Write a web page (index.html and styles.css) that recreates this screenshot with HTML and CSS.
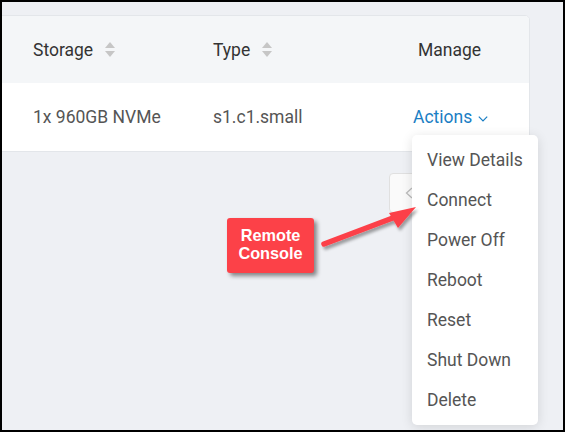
FILE: index.html
```html
<!DOCTYPE html>
<html>
<head>
<meta charset="utf-8">
<link rel="stylesheet" href="styles.css">
</head>
<body>
<div class="frame">
  <div class="card">
    <div class="row head">
      <div class="cell c1">Storage <span class="sort"><i class="up"></i><i class="down"></i></span></div>
      <div class="cell c2">Type <span class="sort"><i class="up"></i><i class="down"></i></span></div>
      <div class="cell c3 manage">Manage</div>
    </div>
    <div class="row body">
      <div class="cell c1">1x 960GB NVMe</div>
      <div class="cell c2">s1.c1.small</div>
      <div class="cell c3"><span class="actions">Actions <svg class="chev" width="10" height="6" viewBox="0 0 10 6"><path d="M0.8 0.6 L5 5 L9.2 0.6" fill="none" stroke="#1a7ec4" stroke-width="1.2"/></svg></span></div>
    </div>
  </div>
  <div class="pager">
    <svg width="8" height="12" viewBox="0 0 8 12"><path d="M7 1 L1.5 6 L7 11" fill="none" stroke="#bbb" stroke-width="1.3"/></svg>
  </div>

  <ul class="menu">
    <li>View Details</li>
    <li>Connect</li>
    <li>Power Off</li>
    <li>Reboot</li>
    <li>Reset</li>
    <li>Shut Down</li>
    <li>Delete</li>
  </ul>

  <div class="callout">Remote<br>Console</div>
  <svg class="arrow" width="565" height="432" viewBox="0 0 565 432">
    <defs>
      <filter id="sh" x="-20%" y="-20%" width="140%" height="160%">
        <feDropShadow dx="2" dy="3" stdDeviation="1.5" flood-color="#000" flood-opacity="0.35"/>
      </filter>
    </defs>
    <g filter="url(#sh)">
      <line x1="324" y1="244" x2="398" y2="216" stroke="#fc4148" stroke-width="5.5" stroke-linecap="round"/>
      <polygon points="416,207 389,213 398,228" fill="#fc4148"/>
    </g>
  </svg>
</div>
</body>
</html>
```

FILE: styles.css
```css
html, body {
  margin: 0;
  padding: 0;
}
body {
  font-family: Roboto, "Noto Sans", Arial, sans-serif;
  font-size: 17.5px;
}
.frame {
  position: relative;
  width: 565px;
  height: 432px;
  box-sizing: border-box;
  border: 2px solid #000;
  background: #eef0f4;
  overflow: hidden;
  padding-top: 13px;
}
.card {
  margin-left: -20px;
  width: 546px;
  background: #fff;
  border: 1px solid #e3e6ea;
  border-radius: 5px;
  overflow: hidden;
}
.row {
  display: grid;
  grid-template-columns: 180px 200px 1fr;
  padding-left: 50px;
  align-items: center;
}
.head {
  height: 67px;
  background: #f4f6f8;
  color: #333;
}
.body {
  height: 68px;
  background: #fff;
  color: #555;
}
.cell {
  display: flex;
  align-items: center;
  white-space: nowrap;
}
.sort {
  display: inline-flex;
  flex-direction: column;
  gap: 3px;
  margin-left: 12px;
}
.sort i {
  width: 0;
  height: 0;
  border-left: 5px solid transparent;
  border-right: 5px solid transparent;
}
.sort .up { border-bottom: 6px solid #c6c6c6; }
.sort .down { border-top: 6px solid #c6c6c6; }
.manage {
  padding-left: 5px;
}
.actions {
  color: #1a7ec4;
  display: inline-flex;
  align-items: center;
}
.chev {
  margin-left: 6px;
  margin-top: 4px;
}
.pager {
  margin-top: 21px;
  margin-left: 387px;
  width: 40px;
  height: 40px;
  box-sizing: border-box;
  background: #fafafa;
  border: 1px solid #e0e0e0;
  border-radius: 4px;
  display: flex;
  align-items: center;
  justify-content: center;
}
.menu {
  position: absolute;
  left: 410px;
  top: 133px;
  width: 126px;
  margin: 0;
  padding: 5px 0;
  list-style: none;
  background: #fff;
  border-radius: 5px;
  box-shadow: 0 2px 12px rgba(0,0,0,0.12);
  color: #555;
}
.menu li {
  height: 40px;
  line-height: 40px;
  padding-left: 15px;
  white-space: nowrap;
}
.callout {
  position: absolute;
  left: 225px;
  top: 216px;
  width: 87px;
  height: 55px;
  box-sizing: border-box;
  background: #fc4148;
  color: #fff;
  border-radius: 3px;
  box-shadow: 3px 3px 4px rgba(0,0,0,0.45);
  font-family: "Liberation Sans", Arial, sans-serif;
  font-weight: bold;
  font-size: 16.3px;
  line-height: 18px;
  text-align: center;
  padding-top: 8px;
}
.arrow {
  position: absolute;
  left: -2px;
  top: -2px;
  pointer-events: none;
}
```
